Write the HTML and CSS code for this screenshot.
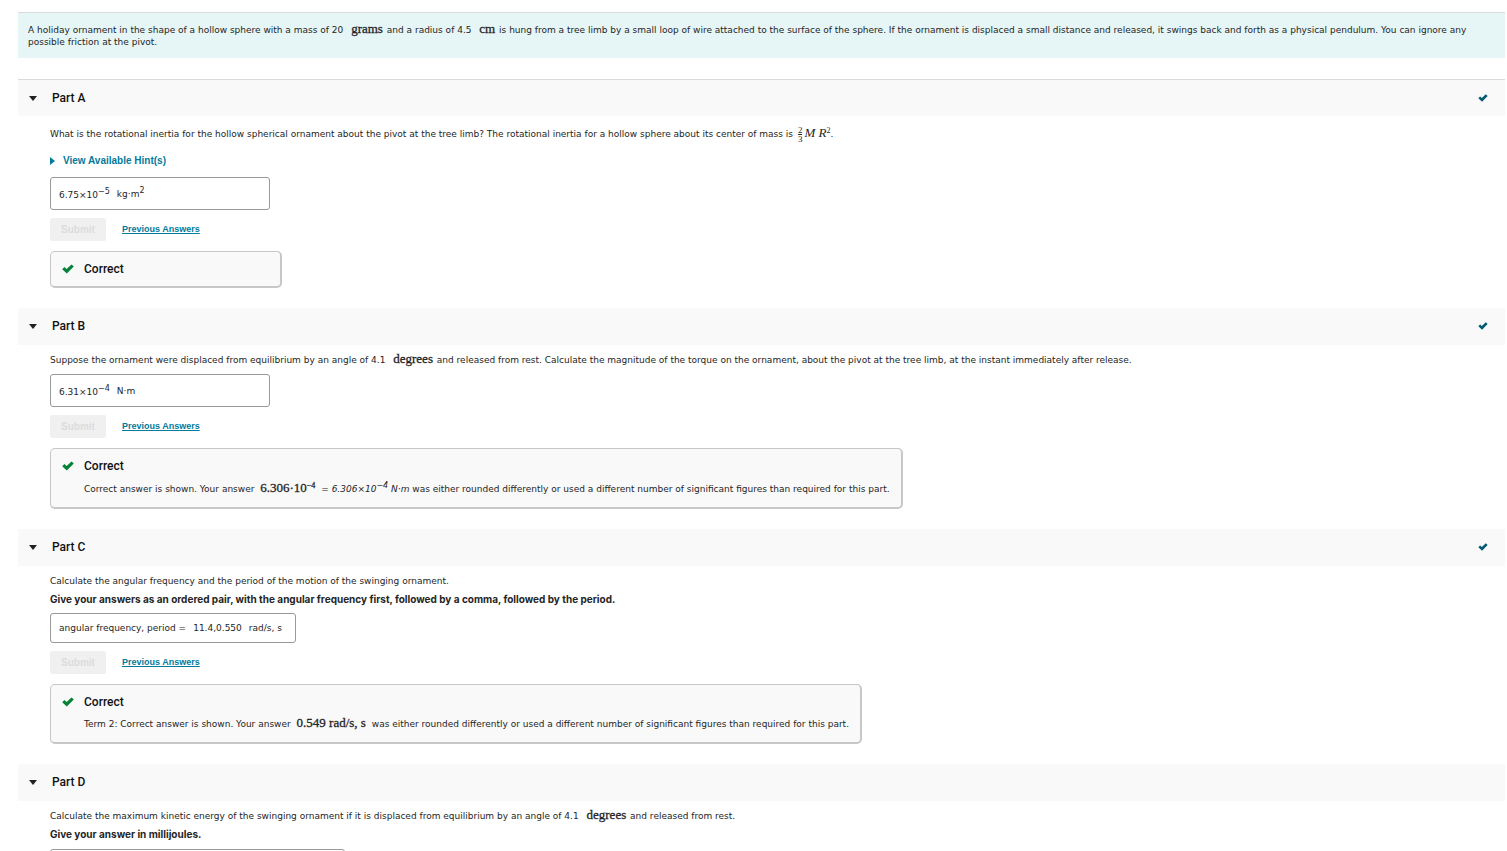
FILE: index.html
```html
<!DOCTYPE html>
<html lang="en">
<head>
<meta charset="UTF-8">
<meta name="viewport" content="width=device-width, initial-scale=1.0">
<title>Physical Pendulum - Holiday Ornament</title>
<link rel="stylesheet" href="styles.css">
</head>
<body>
<svg class="sprite" aria-hidden="true">
    <symbol id="check" viewBox="0 0 12 10">
        <path d="M0.2 5.3 L2.4 3.1 L4.6 5 L9.5 0.4 L11.8 2.4 L4.8 9.6 Z"/>
    </symbol>
</svg>

<main class="container">
    <p class="intro">A holiday ornament in the shape of a hollow sphere with a mass of 20 <span class="unit">grams</span> and a radius of 4.5 <span class="unit">cm</span> is hung from a tree limb by a small loop of wire attached to the surface of the sphere. If the ornament is displaced a small distance and released, it swings back and forth as a physical pendulum. You can ignore any possible friction at the pivot.</p>

    <section class="part part-a">
        <h2 class="part-header">
            <button type="button" class="toggle"><span class="caret"></span>Part A</button>
            <svg class="done"><use href="#check"/></svg>
        </h2>
        <div class="part-body">
            <p class="question">What is the rotational inertia for the hollow spherical ornament about the pivot at the tree limb? The rotational inertia for a hollow sphere about its center of mass is <span class="math"><span class="frac"><span class="num">2</span><span>3</span></span><i>M</i> <i>R</i><sup>2</sup></span>.</p>
            <a href="#" class="hints"><span class="hint-caret"></span>View Available Hint(s)</a>
            <div class="answer"><span class="value">6.75×10<sup>−5</sup></span><span>kg·m<sup>2</sup></span></div>
            <div class="actions">
                <button type="button" class="submit" disabled>Submit</button>
                <a href="#" class="previous">Previous Answers</a>
            </div>
            <div class="feedback short">
                <h3><svg class="tick"><use href="#check"/></svg>Correct</h3>
            </div>
        </div>
    </section>

    <section class="part">
        <h2 class="part-header">
            <button type="button" class="toggle"><span class="caret"></span>Part B</button>
            <svg class="done"><use href="#check"/></svg>
        </h2>
        <div class="part-body">
            <p class="question">Suppose the ornament were displaced from equilibrium by an angle of 4.1 <span class="unit">degrees</span> and released from rest. Calculate the magnitude of the torque on the ornament, about the pivot at the tree limb, at the instant immediately after release.</p>
            <div class="answer"><span class="value">6.31×10<sup>−4</sup></span><span>N·m</span></div>
            <div class="actions">
                <button type="button" class="submit" disabled>Submit</button>
                <a href="#" class="previous">Previous Answers</a>
            </div>
            <div class="feedback">
                <h3><svg class="tick"><use href="#check"/></svg>Correct</h3>
                <p class="spaced">Correct answer is shown. Your answer <span class="math strong">6.306·10<sup>−4</sup></span> = <i>6.306×10<sup>−4</sup> N·m</i> was either rounded differently or used a different number of significant figures than required for this part.</p>
            </div>
        </div>
    </section>

    <section class="part">
        <h2 class="part-header">
            <button type="button" class="toggle"><span class="caret"></span>Part C</button>
            <svg class="done"><use href="#check"/></svg>
        </h2>
        <div class="part-body">
            <p class="question">Calculate the angular frequency and the period of the motion of the swinging ornament.</p>
            <p class="instruction">Give your answers as an ordered pair, with the angular frequency first, followed by a comma, followed by the period.</p>
            <div class="answer inline"><span>angular frequency, period =</span><span>11.4,0.550</span><span>rad/s, s</span></div>
            <div class="actions">
                <button type="button" class="submit" disabled>Submit</button>
                <a href="#" class="previous">Previous Answers</a>
            </div>
            <div class="feedback">
                <h3><svg class="tick"><use href="#check"/></svg>Correct</h3>
                <p>Term 2: Correct answer is shown. Your answer <span class="math strong">0.549 rad/s, s</span> was either rounded differently or used a different number of significant figures than required for this part.</p>
            </div>
        </div>
    </section>

    <section class="part">
        <h2 class="part-header">
            <button type="button" class="toggle"><span class="caret"></span>Part D</button>
        </h2>
        <div class="part-body">
            <p class="question">Calculate the maximum kinetic energy of the swinging ornament if it is displaced from equilibrium by an angle of 4.1 <span class="unit">degrees</span> and released from rest.</p>
            <p class="instruction">Give your answer in millijoules.</p>
            <input type="text" class="answer-input" aria-label="Answer in millijoules">
        </div>
    </section>
</main>
</body>
</html>
```
FILE: styles.css
```css
* {
    box-sizing: border-box;
}
html {
    overflow: hidden;
}
body {
    font-family: "DejaVu Sans", Verdana, sans-serif;
    font-size: 9px;
    line-height: 12px;
    color: #252525;
    background-color: #fff;
    margin: 0;
}
h2, h3, p {
    margin: 0;
}
sup {
    font-size: 8px;
    line-height: 0;
    vertical-align: 4px;
}
.sprite {
    display: none;
}
.container {
    height: 100vh;
    overflow: hidden;
    padding: 12px 2px 0 18px;
}
.intro {
    padding: 11px 20px 10px 10px;
    margin-bottom: 21px;
    background-color: #e6f6f7;
    border-top: 1px solid #d9dcdc;
}
.unit, .math {
    font-family: "Liberation Serif", "Times New Roman", serif;
    font-size: 13px;
    line-height: 0;
}
.unit {
    margin: 0 1px 0 5px;
    -webkit-text-stroke: 0.3px;
}
.part-header {
    display: flex;
    align-items: center;
    justify-content: space-between;
    height: 37px;
    padding: 0 17px 1px 11px;
    background-color: #f9f9f9;
}
.part-a .part-header {
    padding-bottom: 0;
    border-top: 1px solid #d9dcdc;
}
.toggle {
    display: flex;
    align-items: center;
    gap: 15px;
    padding: 0;
    border: none;
    background: none;
    font-family: Roboto, Arial, sans-serif;
    font-size: 12px;
    font-weight: 500;
    color: #111;
    cursor: pointer;
}
.caret {
    border: 4px solid transparent;
    border-top: 5px solid #222;
    border-bottom: none;
}
.done {
    width: 10px;
    height: 8px;
    fill: #005a70;
}
.part-body {
    padding: 8px 32px 20px;
}
.question {
    line-height: 14px;
}
.part-a .question {
    line-height: 20px;
}
.instruction {
    margin-top: 5px;
    line-height: 13px;
    font-family: Inter, Arial, sans-serif;
    font-size: 10px;
    font-weight: 700;
}
.strong {
    margin: 0 3px;
    -webkit-text-stroke: 0.3px;
}
.frac {
    display: inline-flex;
    flex-direction: column;
    vertical-align: middle;
    margin: 0 2px;
    font-size: 9px;
    line-height: 8px;
}
.num {
    border-bottom: 1px solid #252525;
}
.hints {
    display: flex;
    align-items: center;
    gap: 8px;
    margin-top: 11px;
    font-family: "Liberation Sans", Arial, sans-serif;
    font-size: 10px;
    font-weight: bold;
    color: #047a9c;
    text-decoration: none;
}
.hint-caret {
    border: 4px solid transparent;
    border-left: 5px solid #047a9c;
    border-right: none;
}
.answer {
    display: flex;
    align-items: center;
    gap: 7px;
    width: 220px;
    height: 33px;
    margin-top: 7px;
    padding: 0 8px;
    border: 1px solid #999;
    border-radius: 3px;
}
.part-a .answer {
    margin-top: 10px;
}
.value {
    padding-top: 3px;
}
.inline {
    width: max-content;
    height: 30px;
    padding-right: 13px;
}
.actions {
    display: flex;
    align-items: center;
    gap: 16px;
    margin-top: 8px;
}
.submit {
    width: 56px;
    height: 23px;
    padding: 0;
    border: none;
    border-radius: 2px;
    background-color: #f0f0f0;
    color: #dcdcdc;
    font-family: "Liberation Sans", Arial, sans-serif;
    font-size: 10px;
    font-weight: bold;
}
.previous {
    padding-bottom: 2px;
    font-family: "Liberation Sans", Arial, sans-serif;
    font-weight: bold;
    color: #047a9c;
    text-underline-offset: 1px;
}
.feedback {
    width: fit-content;
    margin-top: 10px;
    padding: 10px 11px 11px;
    background-color: #f9f9f9;
    border: 1px solid #c7c7c7;
    border-width: 1px 2px 2px 1px;
    border-radius: 5px;
}
.feedback h3 {
    display: flex;
    align-items: center;
    gap: 10px;
    line-height: 14px;
    font-family: Roboto, Arial, sans-serif;
    font-size: 12px;
    font-weight: 500;
    color: #111;
}
.feedback p {
    margin: 8px 0 0 22px;
    line-height: 14px;
}
.feedback .spaced {
    margin-top: 9px;
}
.short {
    width: 232px;
    padding-bottom: 10px;
}
.tick {
    width: 12px;
    height: 10px;
    fill: #038238;
}
.answer-input {
    display: block;
    width: 295px;
    height: 33px;
    margin-top: 8px;
    border: 1px solid #999;
    border-radius: 3px;
}
```
